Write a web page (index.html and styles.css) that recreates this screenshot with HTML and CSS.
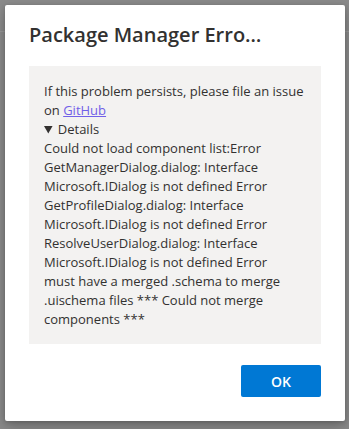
FILE: index.html
```html
<!DOCTYPE html>
<html lang="en">
  <head>
    <meta charset="UTF-8" />
    <meta name="viewport" content="width=device-width, initial-scale=1.0" />
    <title>Package Manager</title>
    <link rel="stylesheet" href="styles.css">
  </head>
  <body>
    <div class="overlay">
      <div class="dialog" role="dialog">
        <h2 class="dialog-title">Package Manager Error Loading Components</h2>
        <div class="dialog-body">
          <p class="hint">
            If this problem persists, please file an issue on
            <a href="#" class="link">GitHub</a>
          </p>
          <details class="details" open>
            <summary>Details</summary>
            <p class="error-text">Could not load component list:Error GetManagerDialog.dialog: Interface Microsoft.IDialog is not defined Error GetProfileDialog.dialog: Interface Microsoft.IDialog is not defined Error ResolveUserDialog.dialog: Interface Microsoft.IDialog is not defined Error must have a merged .schema to merge .uischema files *** Could not merge components ***</p>
          </details>
        </div>
        <div class="dialog-footer">
          <button class="btn btn-primary">OK</button>
        </div>
      </div>
    </div>
  </body>
</html>
```

FILE: styles.css
```css
* {
  box-sizing: border-box;
}
body {
  margin: 0;
  padding: 0;
  font-family: "Open Sans", "Noto Sans", sans-serif;
  color: #323130;
  background: #8a8a8a;
}
.overlay {
  min-height: 429px;
  padding: 5px 4px 8px 5px;
  background: linear-gradient(#8a8a8a 0, #8a8a8a 31px, #979797 31px, #979797 32px, #8a8a8a 32px);
}
.dialog {
  width: 340px;
  height: 416px;
  background: #fff;
  border-radius: 2px;
  padding: 16px 24px 24px 24px;
  display: flex;
  flex-direction: column;
  box-shadow: 0 6px 14px rgba(0, 0, 0, 0.22), 0 1px 4px rgba(0, 0, 0, 0.18);
}
.dialog-title {
  margin: 0 0 19px 0;
  font-size: 20px;
  font-weight: 600;
  line-height: 28px;
  max-width: 235px;
  white-space: nowrap;
  overflow: hidden;
  text-overflow: ellipsis;
}
.dialog-body {
  background: #f3f2f1;
  padding: 16px 15px 15px 15px;
  font-size: 13px;
  line-height: 19px;
}
.hint {
  margin: 0;
}
.link {
  color: #7160e8;
}
.details summary {
  cursor: pointer;
}
.error-text {
  margin: 0;
  max-width: 248px;
}
.dialog-footer {
  margin-top: 21px;
  display: flex;
  justify-content: flex-end;
}
.btn {
  font-family: inherit;
  font-size: 14px;
  font-weight: 600;
  width: 80px;
  height: 32px;
  border-radius: 2px;
  border: none;
}
.btn-primary {
  background: #0078d4;
  color: #fff;
}
```
